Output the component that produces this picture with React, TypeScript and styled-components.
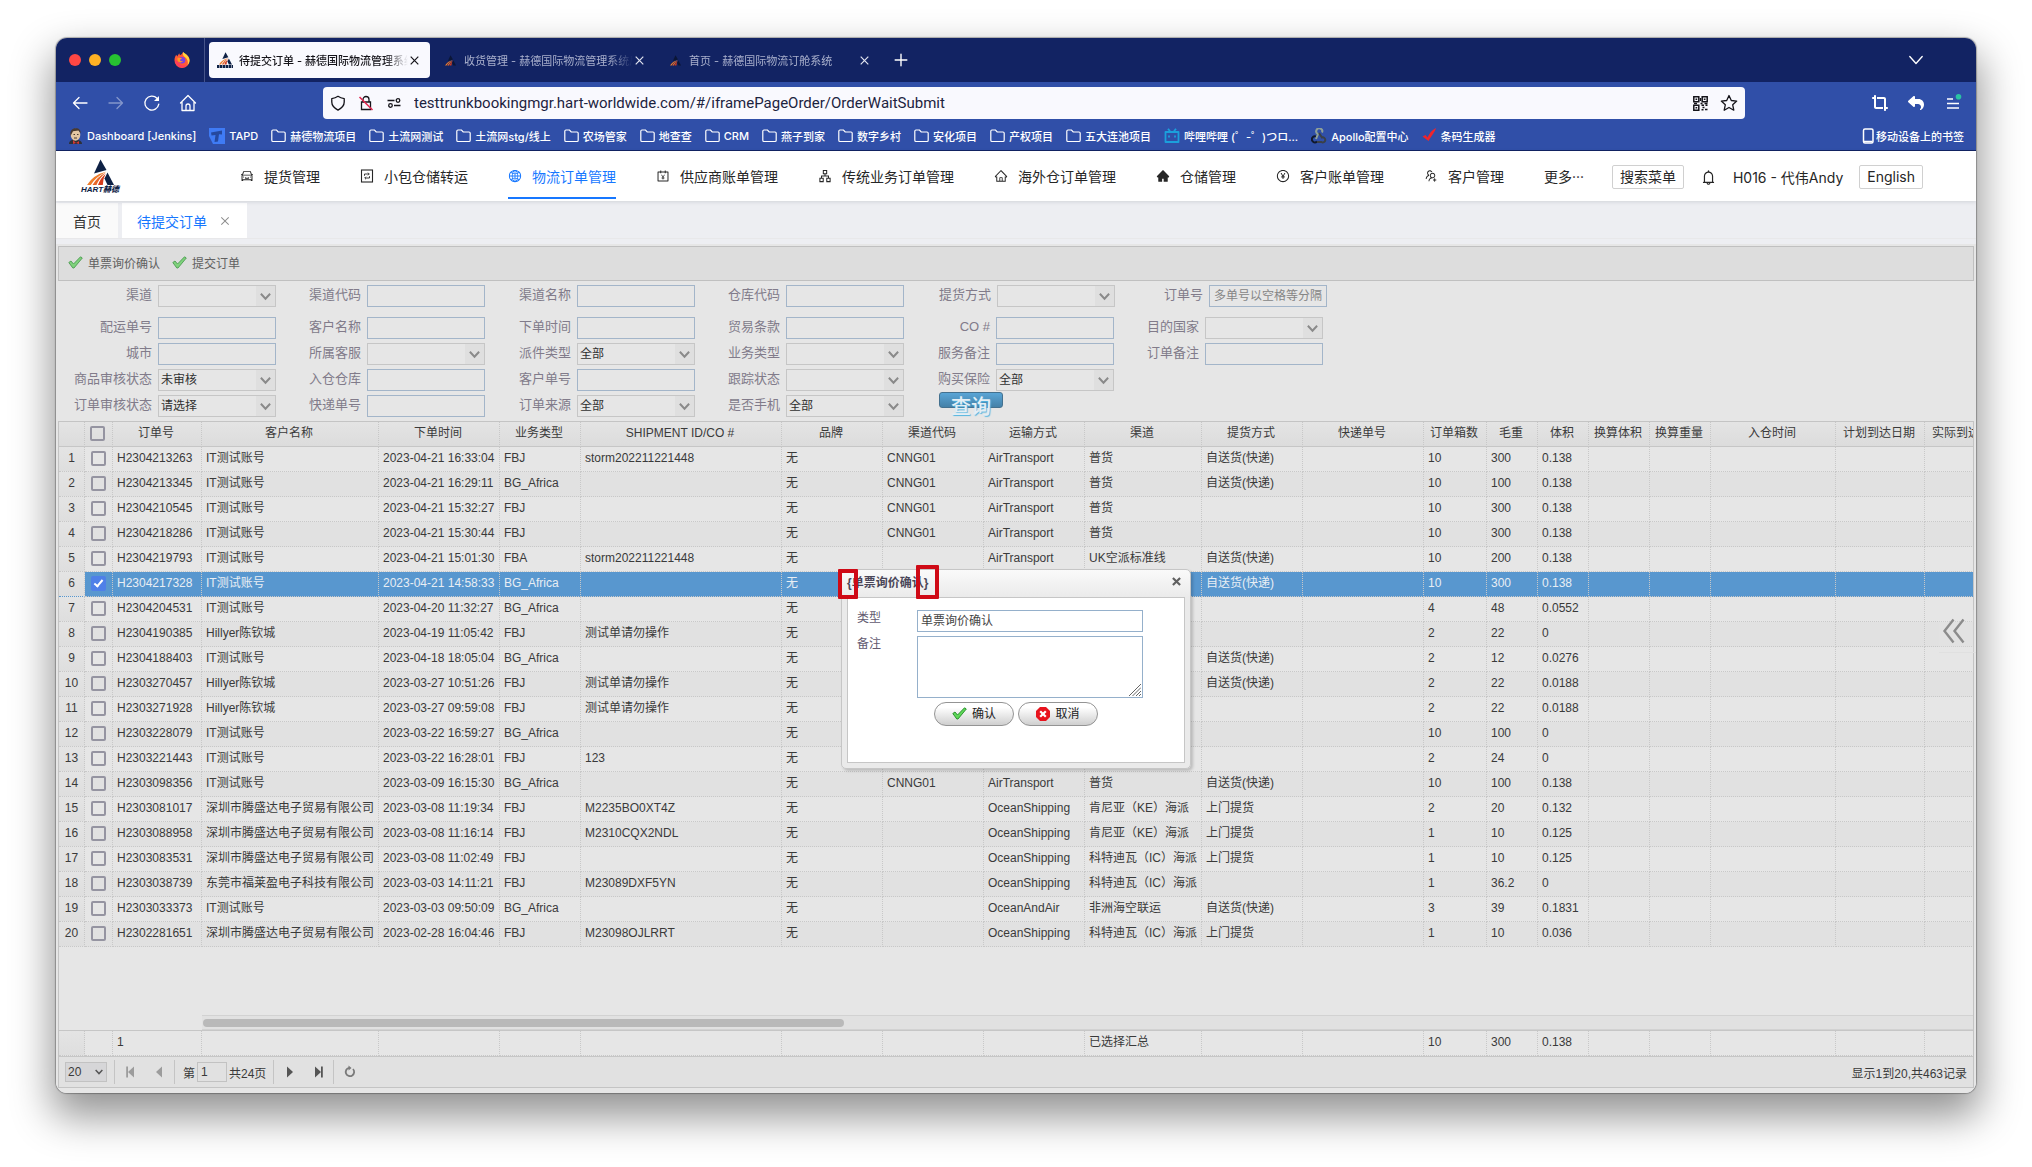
import React, { useState } from "react";
import styled, { createGlobalStyle, css } from "styled-components";
import {
  AiFillHome,
  AiOutlineAccountBook,
  AiOutlineApartment,
  AiOutlineBell,
  AiOutlineCar,
  AiOutlineClose,
  AiOutlineGlobal,
  AiOutlineHome,
  AiOutlinePayCircle,
  AiOutlineUsergroupAdd,
} from "react-icons/ai";
import { FaCropSimple, FaReply } from "react-icons/fa6";

const uiFont = `Inter, "Noto Sans CJK SC", sans-serif`;
const gridFont = `"Liberation Sans", "Noto Sans CJK SC", sans-serif`;

const GlobalStyle = createGlobalStyle`
  *, *::before, *::after { box-sizing: border-box; }
  body { margin: 0; background: #fff; font-family: ${uiFont}; }
  button, input, select, textarea { font: inherit; color: inherit; margin: 0; }
  button { padding: 0; border: 0; background: none; }
  a { color: inherit; text-decoration: none; }
  svg { display: block; flex: none; }
`;

/* ---------- window ---------- */

const Desktop = styled.div`
  display: flex;
  min-height: 100vh;
  padding: 38px 56px 74px;
`;

const Window = styled.div`
  flex: 1;
  min-width: 0;
  display: flex;
  flex-direction: column;
  border-radius: 11px;
  overflow: hidden;
  background: #edeef2;
  box-shadow: 0 0 1px 1px rgba(0, 0, 0, 0.28), 0 20px 40px 4px rgba(0, 0, 0, 0.42);
`;

const TitleBar = styled.div`
  display: flex;
  align-items: center;
  height: 44px;
  padding-right: 52px;
  background: #122363;
  color: #fff;
`;

const Lights = styled.div`
  display: flex;
  gap: 8px;
  padding-left: 13px;
`;

const Light = styled.span<{ $color: string }>`
  width: 12px;
  height: 12px;
  border-radius: 50%;
  background: ${(p) => p.$color};
`;

const FirefoxSlot = styled.div`
  display: flex;
  align-items: center;
  align-self: stretch;
  margin-left: 53px;
  padding-right: 14px;
  border-right: 1px solid #46548a;
`;

const BrowserTabs = styled.div`
  display: flex;
  gap: 4px;
  padding-left: 4px;
`;

const BrowserTab = styled.div<{ $active?: boolean }>`
  display: flex;
  align-items: center;
  gap: 6px;
  width: 221px;
  height: 36px;
  padding: 0 11px 0 8px;
  border-radius: 4px;
  font-size: 11px;
  color: ${(p) => (p.$active ? "#15141a" : "#a9b0cc")};
  background: ${(p) => (p.$active ? "#f9f9fe" : "transparent")};
  font-weight: ${(p) => (p.$active ? 500 : 400)};
`;

const TabTitle = styled.span`
  flex: 1;
  min-width: 0;
  margin-right: -4px;
  overflow: hidden;
  white-space: nowrap;
  mask-image: linear-gradient(to right, #000 calc(100% - 24px), transparent);
`;

const PlainButton = styled.button`
  display: grid;
  place-items: center;
  cursor: pointer;
`;

const PlusButton = styled(PlainButton)`
  margin: 0 auto 0 14px;
`;

const NavBar = styled.div`
  display: flex;
  align-items: center;
  height: 42px;
  padding: 0 14px 0 15px;
  background: #304fa8;
  color: #fff;
`;

const NavButtons = styled.div`
  display: flex;
  gap: 18px;
  width: 252px;
`;

const UrlBar = styled.label`
  flex: 1;
  display: flex;
  align-items: center;
  height: 32px;
  gap: 12px;
  padding: 0 7px;
  border-radius: 4px;
  background: #f9f9fe;
  color: #15141a;
`;

const UrlInput = styled.input`
  flex: 1;
  min-width: 0;
  border: 0;
  outline: 0;
  padding: 0;
  background: transparent;
  font-family: Roboto, sans-serif;
  font-size: 15px;
  color: #1c2340;
`;

const ExtButtons = styled.div`
  display: flex;
  gap: 20px;
  margin-left: 127px;
`;

const BookmarkBar = styled.div`
  display: flex;
  align-items: center;
  gap: 13px;
  height: 27px;
  padding: 0 12px 2px 12px;
  background: #304fa8;
  border-bottom: 1px solid #122363;
  color: #fff;
`;

const Bookmark = styled.a<{ $end?: boolean }>`
  display: flex;
  align-items: center;
  gap: 4px;
  font-size: 11px;
  font-weight: 500;
  white-space: nowrap;
  ${(p) => p.$end && "margin-left: auto; gap: 1px;"}
`;

/* ---------- site header ---------- */

const SiteHeader = styled.header`
  position: relative;
  display: flex;
  align-items: center;
  height: 50px;
  padding: 0 53px 0 24px;
  background: #fff;
  color: #262626;
  box-shadow: 0 1px 4px rgba(0, 21, 41, 0.12);
`;

const Logo = styled.a`
  display: flex;
  flex-direction: column;
  align-items: center;
  width: 40px;
  margin-right: 120px;
`;

const LogoText = styled.span`
  font: italic 900 8px/8px "Liberation Sans", "Noto Sans CJK SC", sans-serif;
  color: #0e2145;
  white-space: nowrap;
`;

const Menu = styled.nav`
  display: flex;
  gap: 40px;
  height: 100%;
`;

const MenuItem = styled.a<{ $active?: boolean }>`
  display: flex;
  align-items: center;
  gap: 10px;
  height: 48px;
  padding-top: 4px;
  font-size: 14px;
  white-space: nowrap;
  border-bottom: 2px solid transparent;
  ${(p) => p.$active && "color: #1677ff; border-color: #1677ff;"}
`;

const HeaderTools = styled.div`
  display: flex;
  align-items: center;
  gap: 16px;
  margin-left: auto;
  padding-top: 2px;
  font-size: 14px;
  white-space: nowrap;
`;

const OutlineButton = styled.button`
  height: 24px;
  padding: 0 7px;
  border: 1px solid #d0d0d0;
  border-radius: 2px;
  background: #fff;
  line-height: 20px;
`;

const PageTabs = styled.div`
  display: flex;
  gap: 4px;
  height: 38px;
  padding-top: 2px;
  margin-bottom: 5px;
  border-bottom: 1px solid #e8e8ea;
  font-size: 14px;
`;

const PageTab = styled.div<{ $active?: boolean }>`
  display: flex;
  align-items: center;
  gap: 12px;
  padding: 0 17px;
  background: #fafafa;
  color: #333;
  ${(p) => p.$active && "background: #fff; color: #1677ff; padding: 0 16px 0 15px;"}
`;

/* ---------- masked frame ---------- */

const Frame = styled.main`
  position: relative;
  flex: 1;
  display: flex;
  flex-direction: column;
  padding: 2px 2px 5px;
  background: #e6e6e6;
  font-family: ${gridFont};
  font-size: 12px;
  color: #3a3a3a;
`;

const Toolbar = styled.div`
  display: flex;
  align-items: center;
  gap: 12px;
  height: 35px;
  padding: 0 9px 2px;
  background: #dddddd;
  border: 1px solid #c0c0c0;
  color: #606060;
`;

const ToolButton = styled.button`
  display: flex;
  align-items: center;
  gap: 5px;
`;

const Filters = styled.form`
  display: flex;
  flex-direction: column;
  gap: 4px;
  padding: 4px 0;
`;

const FilterRow = styled.div<{ $first?: boolean }>`
  display: grid;
  grid-template-columns: 100px 118px 91px 118px 92px 118px 91px 118px 92px 118px 91px 118px;
  ${(p) =>
    p.$first &&
    `grid-template-columns: 100px 118px 91px 118px 92px 118px 91px 118px 93px 118px 94px 118px;
     margin-bottom: 6px;`}
`;

const FilterLabel = styled.label`
  padding-right: 6px;
  text-align: right;
  font-size: 13px;
  line-height: 19px;
  color: #817b8a;
`;

const boxStyle = css`
  width: 100%;
  height: 22px;
  border: 1px solid #a3b5c9;
  border-radius: 0;
  outline: 0;
  background: transparent;
`;

const FilterInput = styled.input`
  ${boxStyle}
  padding: 0 4px;
  &::placeholder { color: #858585; opacity: 1; }
`;

const SelectBox = styled.div`
  position: relative;
  & > svg {
    position: absolute;
    right: 5px;
    top: 6px;
    pointer-events: none;
  }
`;

const FilterSelect = styled.select`
  ${boxStyle}
  appearance: none;
  padding: 0 20px 0 2px;
  border-color: #c6c6c6;
  background: linear-gradient(to right, transparent calc(100% - 19px), #dfdfdf 0);
  color: #303030;
`;

const QueryCell = styled.div`
  grid-column: span 2;
  height: 22px;
  padding-left: 35px;
`;

const QueryButton = styled.button`
  width: 64px;
  height: 16px;
  margin-top: -3px;
  border: 1px solid #44718f;
  border-radius: 3px;
  background: linear-gradient(#5aa5d6, #4581a8);
  color: #e4eef4;
  font-size: 20px;
  font-weight: 500;
  line-height: 28px;
  text-shadow: 1px 1px 1px #4fb4e0;
  display: flex;
  justify-content: center;
`;

/* ---------- data grid ---------- */

const Grid = styled.section`
  flex: 1;
  display: flex;
  flex-direction: column;
  min-width: 0;
  overflow: hidden;
  border: 1px solid #c4c4c4;
`;

const Table = styled.table`
  table-layout: fixed;
  width: 1955px;
  border-collapse: separate;
  border-spacing: 0;
`;

const cellBase = css`
  height: 25px;
  padding: 0 4px 2px;
  overflow: hidden;
  white-space: nowrap;
  line-height: 16px;
  border-right: 1px dotted #c8c8c8;
  font-weight: 400;
`;

const Th = styled.th`
  ${cellBase}
  padding: 0 5px 2px 3px;
  text-align: center;
  background: linear-gradient(#e4e4e4, #dcdcdc);
  border-bottom: 1px solid #c6c6c6;
`;

const Td = styled.td<{ $kind?: "num" }>`
  ${cellBase}
  border-bottom: 1px dotted #c8c8c8;
  ${(p) => p.$kind === "num" && "text-align: center; padding-left: 0; padding-right: 0; background: linear-gradient(#e4e4e4, #dedede);"}
`;

const Row = styled.tr<{ $selected?: boolean }>`
  &:nth-child(even) { background: #e1e1e1; }
  ${(p) =>
    p.$selected &&
    css`
      &&:nth-child(n) { background: #5897cf; color: #e8eef4; }
      & > td:first-child { color: #404040; border-bottom-color: #5897cf; }
    `}
`;

const Tick = styled.input`
  appearance: none;
  display: block;
  width: 15px;
  height: 15px;
  margin: 1px auto 0;
  border: 2px solid #9594a1;
  border-radius: 2px;
  &:checked {
    border-color: #4f80e8;
    background: #4f80e8;
  }
  &:checked::after {
    content: "";
    display: block;
    width: 5px;
    height: 9px;
    margin: 0 0 0 3px;
    border: solid #fff;
    border-width: 0 2px 2px 0;
    transform: rotate(40deg);
  }
`;

const ScrollTrack = styled.div`
  height: 15px;
  margin: auto 0 0 143px;
  padding: 3px 0 0 1px;
  border: solid #d2d2d2;
  border-width: 1px 0;
  background: #e1e1e1;
`;

const ScrollThumb = styled.div`
  width: 36.2%;
  height: 8px;
  border-radius: 4px;
  background: #b9b9b9;
`;

const Footer = styled.div`
  border-top: 1px solid #c6c6c6;
`;

const Pager = styled.div`
  display: flex;
  align-items: center;
  height: 31px;
  padding: 0 6px;
  border-top: 1px solid #c6c6c6;
  background: #e1e1e1;
`;

const PageSize = styled.div`
  position: relative;
  width: 42px;
  & > svg { position: absolute; right: 4px; top: 6px; pointer-events: none; }
`;

const PageSizeSelect = styled.select`
  appearance: none;
  width: 100%;
  height: 20px;
  padding: 0 0 0 2px;
  border: 1px solid #c2c2c2;
  border-radius: 0;
  background: #d6d6d8;
`;

const Divider = styled.span`
  width: 1px;
  height: 24px;
  margin: 0 8px 0 7px;
  background: #c4c4c4;
`;

const PagerButtons = styled.div<{ $dim?: boolean }>`
  display: flex;
  gap: 12px;
  color: ${(p) => (p.$dim ? "#9c9c9c" : "#555")};
`;

const PageInput = styled.input`
  width: 30px;
  height: 20px;
  margin: 0 2px;
  padding: 0 3px;
  border: 1px solid #c2c2c2;
  background: transparent;
`;

const PagerInfo = styled.span`
  margin-left: auto;
`;

const Drawer = styled.button`
  position: absolute;
  right: 0;
  bottom: 440px;
  width: 37px;
  height: 43px;
  padding-right: 8px;
  display: grid;
  place-items: center;
  background: #e6e6e640;
  border-bottom: 1px solid #e0e0e0;
  color: #8c8c8c;
`;

/* ---------- dialog ---------- */

const Mask = styled.div`
  position: absolute;
  inset: 0;
  display: grid;
  place-items: center;
  pointer-events: none;
`;

const Dialog = styled.div`
  position: relative;
  width: 350px;
  height: 200px;
  display: flex;
  flex-direction: column;
  padding: 0 5px 5px;
  border: 1px solid #c6c6c6;
  border-radius: 5px;
  background: linear-gradient(#fafafa, #eaeaea 28px);
  box-shadow: 2px 2px 3px rgba(0, 0, 0, 0.18);
  pointer-events: auto;
`;

const DialogHead = styled.div`
  display: flex;
  align-items: center;
  justify-content: space-between;
  height: 27px;
  padding: 0 4px 4px 0;
  font-weight: 700;
  color: #4a4658;
`;

const DialogBody = styled.form`
  flex: 1;
  display: grid;
  grid-template-columns: 60px 226px;
  grid-auto-rows: max-content;
  row-gap: 4px;
  padding: 12px 0 0 9px;
  border: 1px solid #c6c6c6;
  background: #fff;
`;

const DialogLabel = styled.label`
  line-height: 16px;
  color: #625a70;
`;

const DialogInput = styled.input`
  ${boxStyle}
  padding: 0 3px 2px;
  border-color: #95b0cb;
  color: #444;
`;

const DialogText = styled.textarea`
  ${boxStyle}
  height: 62px;
  resize: none;
  border-color: #95b0cb;
`;

const NoteBox = styled.div`
  position: relative;
  display: flex;
  & > svg { position: absolute; right: 2px; bottom: 2px; pointer-events: none; }
`;

const DialogActions = styled.div`
  grid-column: span 2;
  display: flex;
  gap: 4px;
  padding-left: 77px;
`;

const PillButton = styled.button`
  display: flex;
  align-items: center;
  justify-content: center;
  gap: 5px;
  width: 80px;
  height: 24px;
  border: 1px solid #949494;
  border-radius: 12px;
  background: linear-gradient(#fff 20%, #cfcfcf);
  color: #222;
  line-height: 18px;
`;

const Marker = styled.span<{ $end?: boolean }>`
  position: absolute;
  border: 4px solid #cf0a16;
  border-radius: 1px;
  left: ${(p) => (p.$end ? 74 : -4)}px;
  top: ${(p) => (p.$end ? -5 : -1)}px;
  width: ${(p) => (p.$end ? 23 : 20)}px;
  height: ${(p) => (p.$end ? 34 : 30)}px;
`;

/* ---------- drawings ---------- */

type IconProps = { size?: number; color?: string };

const HartMark = ({ size = 27, dark = "#0e2145" }: { size?: number; dark?: string }) => (
  <svg width={size} height={size} viewBox="0 0 27 26">
    <path d="M13.500 0 L19.500 10.500 L7 14 Z" fill={dark} />
    <path d="M20.500 13 L27 25.500 L20.500 25.500 L17.500 19 Z" fill={dark} />
    <path d="M0 25.500 Q6 15.500 19.500 12 Q8 18 3.800 25.500 Z" fill="#ee7d2c" />
    <path d="M5.500 25.500 Q10.500 17 19 13 Q12 19 9.500 25.500 Z" fill="#e8672a" />
    <path d="M11 25.500 Q13.500 18.500 18.500 14.500 Q16 19 15.800 25.500 Z" fill="#d63c1c" />
  </svg>
);

const TinyText = styled.span`
  width: 16px;
  height: 3px;
  background: repeating-linear-gradient(to right, #0e2145 0 2px, #8a93a8 2px 3px);
`;

const FaviconBox = styled.span`
  display: flex;
  flex-direction: column;
  align-items: center;
  width: 16px;
`;

const Favicon = ({ dim }: { dim?: boolean }) => (
  <FaviconBox>
    <HartMark size={dim ? 11 : 13} dark={dim ? "#0b1636" : "#0e2145"} />
    {!dim && <TinyText />}
  </FaviconBox>
);

const Firefox = () => (
  <svg width="16" height="16" viewBox="0 0 16 16">
    <path d="M8 16A7.600 7.600 0 0 1 .5 8.200C.5 6 1.400 4 2.300 2.800l.9 1.700 2-3.300.8 2C8 2.500 8.500 1.200 9 0c1.200 1 2 2 2.300 3.200l.9-1C14.500 4 15.600 6 15.600 8.300A7.600 7.600 0 0 1 8 16Z" fill="#ff5a36" />
    <path d="M9 0c3.500 2.500 6.300 4.500 6.500 8.300 0 1.700-.6 3.500-1.800 4.800.8-3.800-.5-6.500-3.200-8.300C9.200 3.800 8.500 2 9 0Z" fill="#ffd43c" />
    <path d="M1 8c0 4 3 7.500 7 7.500 2.500 0 4-1 5-2.500-2 1-5 .7-7-1C4 10.500 3 8.500 1 8Z" fill="#ff3b5c" />
    <circle cx="8" cy="8.300" r="3.300" fill="#7542e5" />
    <path d="M3.500 6c2-.8 3.500 0 4.500.5-.5 1-2 .8-2 1.500 0 1 1.500 1.500 3 .8-1 2.500-5 2.200-5.500-.8Z" fill="#ff9a24" />
  </svg>
);

const Cross = ({ size = 9, color = "currentColor" }: IconProps) => (
  <svg width={size} height={size} viewBox="0 0 9 9" stroke={color} strokeWidth="1.200">
    <path d="M.7.7l7.600 7.600M8.300.7L.7 8.300" />
  </svg>
);

const Stroke = ({ d, size = 18, opacity = 1, width = 1.3 }: { d: string; size?: number; opacity?: number; width?: number }) => (
  <svg width={size} height={size} viewBox="0 0 18 18" fill="none" stroke="currentColor" strokeWidth={width} strokeLinecap="round" strokeLinejoin="round" opacity={opacity}>
    <path d={d} />
  </svg>
);

const Reload = () => (
  <svg width="18" height="18" viewBox="0 0 18 18" fill="none" stroke="currentColor" strokeWidth="1.300" strokeLinecap="round">
    <path d="M15.800 10.200A7 7 0 1 1 14 4.300" />
    <path d="M16 2v5h-5z" fill="currentColor" stroke="none" />
  </svg>
);

const Lock = () => (
  <svg width="16" height="16" viewBox="0 0 16 16" fill="none" stroke="currentColor" strokeWidth="1.300">
    <path d="M5 7V4.500a3 3 0 0 1 6 0V7M3.500 7h9v7.500h-9z" />
    <path d="M1.500 2l13 13" stroke="#e22850" strokeWidth="1.600" />
  </svg>
);

const Permissions = () => (
  <svg width="16" height="16" viewBox="0 0 16 16" fill="none" stroke="currentColor" strokeWidth="1.300">
    <path d="M1.500 5.500h7M8 10.500h6.500" />
    <circle cx="12" cy="5.500" r="1.800" />
    <circle cx="4.500" cy="10.500" r="1.800" />
  </svg>
);

const QrCode = () => (
  <svg width="15" height="15" viewBox="0 0 15 15" fill="none" stroke="currentColor" strokeWidth="1.500">
    <path d="M.8.800h5v5h-5zM9.200.800h5v5h-5zM.8 9.200h5v5h-5z" />
    <path d="M2.500 3.300h1.700M10.800 3.300h1.700M2.500 11.700h1.700M8.500 9.200h2.500M12.500 9.200h2M9.500 11.500h2M12 13.500h2.500M8.500 13.800h2M7.500 2v3M7.500 7.500h2M11.500 7.500h3M1 7.500h3" />
  </svg>
);

const BurgerDot = () => (
  <svg width="18" height="18" viewBox="0 0 18 18" fill="none" stroke="currentColor" strokeWidth="1.300">
    <path d="M3 5h6M3 9.500h12M3 14h12" />
    <circle cx="14.500" cy="2.800" r="2.800" fill="#2ac3a2" stroke="none" />
  </svg>
);

const Folder = () => (
  <svg width="15" height="14" viewBox="0 0 15 14" fill="none" stroke="currentColor" strokeWidth="1.200">
    <path d="M.8 11.200V2.300C.8 1.500 1.300 1 2 1h3.500l1.700 2H13c.7 0 1.200.5 1.200 1.200v7c0 .8-.5 1.300-1.200 1.300H2C1.300 12.500.8 12 .8 11.200Z" />
  </svg>
);

const Jenkins = () => (
  <svg width="15" height="16" viewBox="0 0 15 16">
    <path d="M1 16c0-3 2-4.500 6-4.500s7 1.500 7 4.500Z" fill="#2d3038" />
    <path d="M5 12l3 3 3-2v3l-3-1-3 1Z" fill="#d33833" />
    <ellipse cx="7.500" cy="6.800" rx="4.800" ry="6" fill="#e3c6a2" />
    <path d="M2.500 8C1.500 2 5 0 8 .3c3 0 5 2 4.500 5L10.500 2.500 5 3.200Z" fill="#4a3a2f" />
    <path d="M5.500 6.500h1.500M9 6.500h1.500M6 10h3" stroke="#4a3a2f" />
  </svg>
);

const Tapd = () => (
  <svg width="16" height="16" viewBox="0 0 16 16">
    <path d="M0 0h16v16H4L0 8Z" fill="#3f7bf5" />
    <path d="M2 4.500l11-2v4l-3-.3-1 7.300-3.500.5L6.500 7 2.500 7.500Z" fill="#2549a0" />
  </svg>
);

const Bili = () => (
  <svg width="16" height="16" viewBox="0 0 16 16" fill="none" stroke="#1ba0dc" strokeWidth="1.800">
    <path d="M4 .8l2 2.500M12 .8l-2 2.500M1.500 4h13v10h-13z" strokeLinejoin="round" />
    <path d="M5 7.500v2M11 7.500v2" />
  </svg>
);

const Apollo = () => (
  <svg width="16" height="16" viewBox="0 0 16 16" fill="none" strokeWidth="2">
    <path d="M5 8.500A3 3 0 1 0 6 13.500" stroke="#10182c" />
    <path d="M11 4.500A3 3 0 1 0 7 6l-2 5" stroke="#8fa098" />
    <path d="M8 5l3 4.500a2.500 2.500 0 1 1-.5 4.500H6" stroke="#3a4048" />
  </svg>
);

const RedCheck = () => (
  <svg width="15" height="16" viewBox="0 0 15 16">
    <path d="M.5 8.500l3-1.500 2 2.500C7.500 5 10 2 14 0c-.5 3-5 8.500-7.500 13Z" fill="#f1242b" />
  </svg>
);

const Phone = () => (
  <svg width="13" height="16" viewBox="0 0 13 16" fill="none" stroke="currentColor">
    <rect x="1.500" y="1" width="9.500" height="14" rx="1.500" strokeWidth="1.500" />
    <path d="M2 13.500h8.500" strokeWidth="1.500" />
  </svg>
);

const Transfer = () => (
  <svg width="14" height="14" viewBox="0 0 14 14" fill="none" stroke="currentColor" strokeWidth="1.100">
    <rect x="1.500" y="1" width="11" height="12" />
    <path d="M4.500 6.800V5h4.500M8 3.700L9.300 5 8 6.300M9.500 7.200V9H5M6 7.700L4.700 9 6 10.300" strokeWidth=".9" />
  </svg>
);

const GreenCheck = ({ soft }: { soft?: boolean }) => (
  <svg width="15" height="13" viewBox="0 0 15 13">
    <path d="M.8 6.500L3 5l2.500 3L12.500.8 14.300 2 6 12H4.800Z" fill={soft ? "#7fd27c" : "#5fd858"} stroke={soft ? "#4d9c52" : "#1f8a25"} strokeWidth=".9" strokeLinejoin="round" />
  </svg>
);

const CancelIcon = () => (
  <svg width="14" height="14" viewBox="0 0 14 14">
    <path d="M4 0h6l4 4v6l-4 4H4l-4-4V4Z" fill="#e8131d" />
    <path d="M4.200 4.200l5.600 5.600M9.800 4.200L4.200 9.800" stroke="#fff" strokeWidth="2.200" />
  </svg>
);

const Caret = ({ size = 10, color = "#8a8a8a" }: IconProps) => (
  <svg width={size} height={size} viewBox="0 0 10 10" fill="none" stroke={color} strokeWidth="1.800">
    <path d="M.8 2.500L5 7l4.200-4.500" />
  </svg>
);

const PagerIcon = ({ bar, back }: { bar?: boolean; back?: boolean }) => (
  <svg width="16" height="16" viewBox="0 0 16 16" fill="currentColor">
    <g transform={back ? "translate(16 0) scale(-1 1)" : undefined}>
      <path d="M5 2.500l6 5.500-6 5.500Z" />
      {bar && <path d="M11 2.500h1.800v11H11z" />}
    </g>
  </svg>
);

const RefreshIcon = () => (
  <svg width="16" height="16" viewBox="0 0 16 16" fill="none" stroke="#7a7a7a" strokeWidth="1.800">
    <path d="M11 5a4.200 4.200 0 1 1-4-1.200" />
    <path d="M6.500 1.500L9.500 4l-3 2.500z" fill="#7a7a7a" stroke="none" />
  </svg>
);

const Grip = () => (
  <svg width="12" height="12" viewBox="0 0 12 12" stroke="#666" strokeWidth="1">
    <path d="M0 12L12 0M3.500 12L12 3.500M7 12l5-5M10 12l2-2" />
  </svg>
);

/* ---------- data ---------- */

const folders = ["赫德物流项目", "土流网测试", "土流网stg/线上", "农场管家", "地查查", "CRM", "燕子到家", "数字乡村", "安化项目", "产权项目", "五大连池项目"];

const menu: { label: string; icon: React.ReactNode; active?: boolean }[] = [
  { label: "提货管理", icon: <AiOutlineCar size={14} /> },
  { label: "小包仓储转运", icon: <Transfer /> },
  { label: "物流订单管理", icon: <AiOutlineGlobal size={14} />, active: true },
  { label: "供应商账单管理", icon: <AiOutlineAccountBook size={14} /> },
  { label: "传统业务订单管理", icon: <AiOutlineApartment size={14} /> },
  { label: "海外仓订单管理", icon: <AiOutlineHome size={14} /> },
  { label: "仓储管理", icon: <AiFillHome size={14} /> },
  { label: "客户账单管理", icon: <AiOutlinePayCircle size={14} /> },
  { label: "客户管理", icon: <AiOutlineUsergroupAdd size={14} /> },
];

type Field = { label: string; value?: string; select?: boolean; placeholder?: string };
const s = (label: string, value = ""): Field => ({ label, value, select: true });
const t = (label: string, placeholder?: string): Field => ({ label, placeholder });

const filterRows: Field[][] = [
  [s("渠道"), t("渠道代码"), t("渠道名称"), t("仓库代码"), s("提货方式"), t("订单号", "多单号以空格等分隔!")],
  [t("配运单号"), t("客户名称"), t("下单时间"), t("贸易条款"), t("CO #"), s("目的国家")],
  [t("城市"), s("所属客服"), s("派件类型", "全部"), s("业务类型"), t("服务备注"), t("订单备注")],
  [s("商品审核状态", "未审核"), t("入仓仓库"), t("客户单号"), s("跟踪状态"), s("购买保险", "全部")],
  [s("订单审核状态", "请选择"), t("快递单号"), s("订单来源", "全部"), s("是否手机", "全部")],
];

const columns: [string, number][] = [
  ["订单号", 89], ["客户名称", 177], ["下单时间", 121], ["业务类型", 81], ["SHIPMENT ID/CO #", 201], ["品牌", 101],
  ["渠道代码", 101], ["运输方式", 101], ["渠道", 117], ["提货方式", 101], ["快递单号", 121], ["订单箱数", 63],
  ["毛重", 51], ["体积", 51], ["换算体积", 61], ["换算重量", 61], ["入仓时间", 125], ["计划到达日期", 89], ["实际到达日期", 89],
];

const it = "IT测试账号";
const hi = "Hillyer陈钦城";
const sz = "深圳市腾盛达电子贸易有限公司";
const self = "自送货(快递)";
const door = "上门提货";
const air = "AirTransport";
const sea = "OceanShipping";
const test = "测试单请勿操作";

/* order, customer, time, type, shipment, channel code, transport, channel, pickup, boxes, weight, volume */
const orders: string[][] = [
  ["H2304213263", it, "2023-04-21 16:33:04", "FBJ", "storm202211221448", "CNNG01", air, "普货", self, "10", "300", "0.138"],
  ["H2304213345", it, "2023-04-21 16:29:11", "BG_Africa", "", "CNNG01", air, "普货", self, "10", "100", "0.138"],
  ["H2304210545", it, "2023-04-21 15:32:27", "FBJ", "", "CNNG01", air, "普货", "", "10", "300", "0.138"],
  ["H2304218286", it, "2023-04-21 15:30:44", "FBJ", "", "CNNG01", air, "普货", "", "10", "300", "0.138"],
  ["H2304219793", it, "2023-04-21 15:01:30", "FBA", "storm202211221448", "", air, "UK空派标准线", self, "10", "200", "0.138"],
  ["H2304217328", it, "2023-04-21 14:58:33", "BG_Africa", "", "", "", "", self, "10", "300", "0.138"],
  ["H2304204531", it, "2023-04-20 11:32:27", "BG_Africa", "", "", "", "", "", "4", "48", "0.0552"],
  ["H2304190385", hi, "2023-04-19 11:05:42", "FBJ", test, "", "", "", "", "2", "22", "0"],
  ["H2304188403", it, "2023-04-18 18:05:04", "BG_Africa", "", "", "", "", self, "2", "12", "0.0276"],
  ["H2303270457", hi, "2023-03-27 10:51:26", "FBJ", test, "", "", "", self, "2", "22", "0.0188"],
  ["H2303271928", hi, "2023-03-27 09:59:08", "FBJ", test, "", "", "", "", "2", "22", "0.0188"],
  ["H2303228079", it, "2023-03-22 16:59:27", "BG_Africa", "", "", "", "", "", "10", "100", "0"],
  ["H2303221443", it, "2023-03-22 16:28:01", "FBJ", "123", "", "", "", "", "2", "24", "0"],
  ["H2303098356", it, "2023-03-09 16:15:30", "BG_Africa", "", "CNNG01", air, "普货", self, "10", "100", "0.138"],
  ["H2303081017", sz, "2023-03-08 11:19:34", "FBJ", "M2235BO0XT4Z", "", sea, "肯尼亚（KE）海派", door, "2", "20", "0.132"],
  ["H2303088958", sz, "2023-03-08 11:16:14", "FBJ", "M2310CQX2NDL", "", sea, "肯尼亚（KE）海派", door, "1", "10", "0.125"],
  ["H2303083531", sz, "2023-03-08 11:02:49", "FBJ", "", "", sea, "科特迪瓦（IC）海派", door, "1", "10", "0.125"],
  ["H2303038739", "东莞市福莱盈电子科技有限公司", "2023-03-03 14:11:21", "FBJ", "M23089DXF5YN", "", sea, "科特迪瓦（IC）海派", "", "1", "36.2", "0"],
  ["H2303033373", it, "2023-03-03 09:50:09", "BG_Africa", "", "", "OceanAndAir", "非洲海空联运", self, "3", "39", "0.1831"],
  ["H2302281651", sz, "2023-02-28 16:04:46", "FBJ", "M23098OJLRRT", "", sea, "科特迪瓦（IC）海派", door, "1", "10", "0.036"],
];

const toCells = (o: string[]) => [...o.slice(0, 5), "无", ...o.slice(5, 9), "", ...o.slice(9), "", "", "", "", ""];
const summary = ["1", "", "", "", "", "", "", "", "已选择汇总", "", "", "10", "300", "0.138", "", "", "", "", ""];

const Cols = () => (
  <colgroup>
    <col width={26} />
    <col width={28} />
    {columns.map(([name, w]) => (
      <col key={name} width={w} />
    ))}
  </colgroup>
);

const FilterField = ({ field }: { field: Field }) => {
  const id = `f-${field.label}`;
  return (
    <>
      <FilterLabel htmlFor={id}>{field.label}</FilterLabel>
      {field.select ? (
        <SelectBox>
          <FilterSelect id={id}>
            <option>{field.value}</option>
          </FilterSelect>
          <Caret size={11} />
        </SelectBox>
      ) : (
        <FilterInput id={id} placeholder={field.placeholder} />
      )}
    </>
  );
};

export default function App() {
  const [selected, setSelected] = useState(5);

  return (
    <>
      <GlobalStyle />
      <Desktop>
        <Window>
          <TitleBar>
            <Lights>
              <Light $color="#fe4744" />
              <Light $color="#feb024" />
              <Light $color="#27c231" />
            </Lights>
            <FirefoxSlot>
              <Firefox />
            </FirefoxSlot>
            <BrowserTabs>
              <BrowserTab $active>
                <Favicon />
                <TabTitle>待提交订单 - 赫德国际物流管理系统</TabTitle>
                <PlainButton aria-label="关闭标签页"><Cross /></PlainButton>
              </BrowserTab>
              <BrowserTab>
                <Favicon dim />
                <TabTitle>收货管理 - 赫德国际物流管理系统后台</TabTitle>
                <PlainButton aria-label="关闭标签页"><Cross color="#e0e3ef" /></PlainButton>
              </BrowserTab>
              <BrowserTab>
                <Favicon dim />
                <TabTitle>首页 - 赫德国际物流订舱系统</TabTitle>
                <PlainButton aria-label="关闭标签页"><Cross color="#e0e3ef" /></PlainButton>
              </BrowserTab>
            </BrowserTabs>
            <PlusButton aria-label="新建标签页">
              <Stroke size={14} width={1.8} d="M9 1.500v15M1.500 9h15" />
            </PlusButton>
            <PlainButton aria-label="列出所有标签页">
              <Stroke size={16} width={1.5} d="M2 5l7 8 7-8" />
            </PlainButton>
          </TitleBar>

          <NavBar>
            <NavButtons>
              <PlainButton aria-label="后退"><Stroke d="M16 9H2.500M8 3.500L2.500 9 8 14.500" /></PlainButton>
              <PlainButton aria-label="前进"><Stroke opacity={0.4} d="M2 9h13.500M10 3.500L15.500 9 10 14.500" /></PlainButton>
              <PlainButton aria-label="刷新"><Reload /></PlainButton>
              <PlainButton aria-label="主页"><Stroke d="M1.500 9L9 1.500 16.500 9M3 7.500v9h12v-9M7 16.500V12a2 2 0 0 1 4 0v4.500" /></PlainButton>
            </NavButtons>
            <UrlBar>
              <Stroke size={16} width={1.5} d="M9 1.500C11 3 13.500 3.800 16 4v4c0 4-3 7-7 9-4-2-7-5-7-9V4c2.500-.2 5-1 7-2.500Z" />
              <Lock />
              <Permissions />
              <UrlInput aria-label="地址栏" defaultValue="testtrunkbookingmgr.hart-worldwide.com/#/iframePageOrder/OrderWaitSubmit" />
              <QrCode />
              <Stroke size={18} width={1.3} d="M9 1.500l2.300 5 5.400.6-4 3.700 1.100 5.400L9 13.500l-4.800 2.700 1.100-5.400-4-3.700 5.400-.6Z" />
            </UrlBar>
            <ExtButtons>
              <PlainButton aria-label="截图"><FaCropSimple size={16} /></PlainButton>
              <PlainButton aria-label="撤销"><FaReply size={16} /></PlainButton>
              <PlainButton aria-label="菜单"><BurgerDot /></PlainButton>
            </ExtButtons>
          </NavBar>

          <BookmarkBar>
            <Bookmark href="#"><Jenkins />Dashboard [Jenkins]</Bookmark>
            <Bookmark href="#"><Tapd />TAPD</Bookmark>
            {folders.map((f) => (
              <Bookmark href="#" key={f}><Folder />{f}</Bookmark>
            ))}
            <Bookmark href="#"><Bili />哔哩哔哩 (゜-゜)つロ...</Bookmark>
            <Bookmark href="#"><Apollo />Apollo配置中心</Bookmark>
            <Bookmark href="#"><RedCheck />条码生成器</Bookmark>
            <Bookmark href="#" $end><Phone />移动设备上的书签</Bookmark>
          </BookmarkBar>

          <SiteHeader>
            <Logo href="#">
              <HartMark size={27} />
              <LogoText>HART赫德</LogoText>
            </Logo>
            <Menu>
              {menu.map((m) => (
                <MenuItem href="#" key={m.label} $active={m.active}>{m.icon}{m.label}</MenuItem>
              ))}
              <MenuItem href="#">更多···</MenuItem>
            </Menu>
            <HeaderTools>
              <OutlineButton>搜索菜单</OutlineButton>
              <PlainButton aria-label="通知"><AiOutlineBell size={17} /></PlainButton>
              <span>H016 - 代伟Andy</span>
              <OutlineButton>English</OutlineButton>
            </HeaderTools>
          </SiteHeader>

          <PageTabs>
            <PageTab>首页</PageTab>
            <PageTab $active>
              待提交订单
              <PlainButton aria-label="关闭"><AiOutlineClose size={12} color="#8c8c8c" /></PlainButton>
            </PageTab>
          </PageTabs>

          <Frame>
            <Toolbar>
              <ToolButton><GreenCheck soft />单票询价确认</ToolButton>
              <ToolButton><GreenCheck soft />提交订单</ToolButton>
            </Toolbar>

            <Filters>
              {filterRows.map((row, i) => (
                <FilterRow key={i} $first={i === 0}>
                  {row.map((f) => <FilterField key={f.label} field={f} />)}
                  {i === 4 && (
                    <QueryCell>
                      <QueryButton type="button">查询</QueryButton>
                    </QueryCell>
                  )}
                </FilterRow>
              ))}
            </Filters>

            <Grid>
              <Table>
                <Cols />
                <thead>
                  <tr>
                    <Th />
                    <Th><Tick type="checkbox" aria-label="全选" /></Th>
                    {columns.map(([name]) => <Th key={name}>{name}</Th>)}
                  </tr>
                </thead>
                <tbody>
                  {orders.map((o, i) => (
                    <Row key={o[0]} $selected={i === selected}>
                      <Td $kind="num">{i + 1}</Td>
                      <Td>
                        <Tick type="checkbox" aria-label={o[0]} checked={i === selected} onChange={() => setSelected(i)} />
                      </Td>
                      {toCells(o).map((c, j) => <Td key={j}>{c}</Td>)}
                    </Row>
                  ))}
                </tbody>
              </Table>
              <ScrollTrack>
                <ScrollThumb />
              </ScrollTrack>
              <Footer>
                <Table>
                  <Cols />
                  <tbody>
                    <tr>
                      <Td $kind="num" />
                      <Td />
                      {summary.map((c, j) => <Td key={j}>{c}</Td>)}
                    </tr>
                  </tbody>
                </Table>
              </Footer>
              <Pager>
                <PageSize>
                  <PageSizeSelect aria-label="每页条数"><option>20</option></PageSizeSelect>
                  <Caret size={8} color="#555" />
                </PageSize>
                <Divider />
                <PagerButtons $dim>
                  <PlainButton aria-label="第一页"><PagerIcon bar back /></PlainButton>
                  <PlainButton aria-label="上一页"><PagerIcon back /></PlainButton>
                </PagerButtons>
                <Divider />
                <label htmlFor="page-no">第</label>
                <PageInput id="page-no" defaultValue="1" />
                <span>共24页</span>
                <Divider />
                <PagerButtons>
                  <PlainButton aria-label="下一页"><PagerIcon /></PlainButton>
                  <PlainButton aria-label="最后一页"><PagerIcon bar /></PlainButton>
                </PagerButtons>
                <Divider />
                <PlainButton aria-label="刷新列表"><RefreshIcon /></PlainButton>
                <PagerInfo>显示1到20,共463记录</PagerInfo>
              </Pager>
            </Grid>

            <Drawer aria-label="展开侧栏">
              <svg width="24" height="26" viewBox="0 0 24 26" fill="none" stroke="currentColor" strokeWidth="2.400">
                <path d="M11.500 1.500L2.500 13l9 11.500M21.500 1.500L12.500 13l9 11.500" />
              </svg>
            </Drawer>

            <Mask>
              <Dialog role="dialog" aria-label="单票询价确认">
                <DialogHead>
                  <span>{"{单票询价确认}"}</span>
                  <PlainButton aria-label="关闭窗口">
                    <svg width="9" height="9" viewBox="0 0 10 10" stroke="#606060" strokeWidth="2.400">
                      <path d="M1 1l8 8M9 1L1 9" />
                    </svg>
                  </PlainButton>
                </DialogHead>
                <DialogBody>
                  <DialogLabel htmlFor="d-type">类型</DialogLabel>
                  <DialogInput id="d-type" defaultValue="单票询价确认" />
                  <DialogLabel htmlFor="d-note">备注</DialogLabel>
                  <NoteBox>
                    <DialogText id="d-note" />
                    <Grip />
                  </NoteBox>
                  <DialogActions>
                    <PillButton type="button"><GreenCheck />确认</PillButton>
                    <PillButton type="button"><CancelIcon />取消</PillButton>
                  </DialogActions>
                </DialogBody>
                <Marker />
                <Marker $end />
              </Dialog>
            </Mask>
          </Frame>
        </Window>
      </Desktop>
    </>
  );
}
